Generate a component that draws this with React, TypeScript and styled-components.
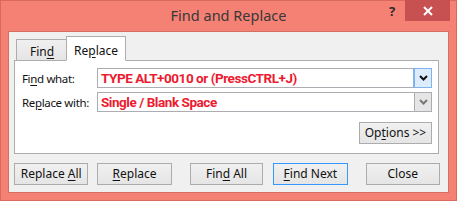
import React from "react";
import styled, { createGlobalStyle, css } from "styled-components";

const Global = createGlobalStyle`
  html, body { margin: 0; padding: 0; background: #f47f72; }
  body { width: 457px; height: 201px; overflow: hidden; }
`;

const FONT = `"Noto Sans", "Open Sans", "Liberation Sans", sans-serif`;

const Window = styled.div`
  box-sizing: border-box;
  width: 457px;
  height: 201px;
  background: #f58174;
  border: 1px solid #d96a5e;
  display: flex;
  flex-direction: column;
  font-family: ${FONT};
`;

const TitleBar = styled.div`
  position: relative;
  height: 30px;
  display: flex;
  align-items: center;
  justify-content: center;
  flex-shrink: 0;
`;

const Title = styled.div`
  font-size: 14.5px;
  color: #383838;
  margin-top: -2px;
`;

const HelpBtn = styled.div`
  position: absolute;
  left: 384px;
  top: 2px;
  width: 14px;
  height: 16px;
  font-size: 13px;
  font-weight: bold;
  color: #2b2b2b;
  text-align: center;
  line-height: 16px;
`;

const CloseBtn = styled.div`
  position: absolute;
  left: 404px;
  top: -1px;
  width: 45px;
  height: 21px;
  background: #c75050;
  display: flex;
  align-items: center;
  justify-content: center;
`;

const Client = styled.div`
  box-sizing: border-box;
  margin: 0 7px 7px 7px;
  flex: 1;
  background: #f0f0f0;
  border: 1px solid #d47063;
  padding: 4px 8px 0 5px;
  display: flex;
  flex-direction: column;
`;

const TabStrip = styled.div`
  display: flex;
  align-items: flex-end;
  padding-left: 2px;
  height: 25px;
  position: relative;
  z-index: 1;
  margin-bottom: -1px;
`;

const Tab = styled.div<{ $active?: boolean }>`
  box-sizing: border-box;
  font-size: 12px;
  color: #111;
  border: 1px solid #adadad;
  display: flex;
  justify-content: center;
  ${(p) =>
    p.$active
      ? css`
          height: 25px;
          width: 60px;
          background: #fff;
          border-bottom-color: #fff;
          padding-top: 5px;
          margin-left: -1px;
        `
      : css`
          height: 22px;
          width: 51px;
          background: linear-gradient(#f0f0f0, #e5e5e5);
          border-right: none;
          padding-top: 3px;
        `}
`;

const U = styled.span`
  text-decoration: underline;
  text-underline-offset: 2px;
`;

const Panel = styled.div`
  box-sizing: border-box;
  height: 94px;
  background: #fff;
  border: 1px solid #adadad;
  margin-right: 1px;
  padding: 7px 6px 0 7px;
  display: flex;
  flex-direction: column;
`;

const FieldRow = styled.div`
  display: flex;
  align-items: center;
  height: 20px;
  margin-bottom: 4px;
`;

const Label = styled.div`
  width: 75px;
  font-size: 11.5px;
  letter-spacing: -0.35px;
  color: #111;
`;

const Combo = styled.div`
  box-sizing: border-box;
  flex: 1;
  height: 20px;
  border: 1px solid #abadb3;
  display: flex;
  align-items: center;
  background: #fff;
`;

const ComboText = styled.div`
  flex: 1;
  padding-left: 3px;
  font-family: Roboto, "Noto Sans", sans-serif;
  font-size: 13.5px;
  letter-spacing: -0.45px;
  font-weight: bold;
  color: #ec1b30;
  white-space: nowrap;
  overflow: hidden;
`;

const DropBtn = styled.div<{ $focus?: boolean }>`
  box-sizing: border-box;
  width: 17px;
  height: 18px;
  display: flex;
  align-items: center;
  justify-content: center;
  border-left: 1px solid ${(p) => (p.$focus ? "#7eb4ea" : "#acacac")};
  background: ${(p) => (p.$focus ? "#dcecfc" : "#e5e5e5")};
  ${(p) =>
    p.$focus &&
    css`
      outline: 1px solid #7eb4ea;
      outline-offset: 0;
    `}
`;

const OptionsRow = styled.div`
  display: flex;
  justify-content: flex-end;
  margin-top: 6px;
`;

const Button = styled.div<{ $default?: boolean; $w?: number }>`
  box-sizing: border-box;
  width: ${(p) => p.$w ?? 75}px;
  height: 22px;
  border: 1px solid ${(p) => (p.$default ? "#3399ff" : "#acacac")};
  background: linear-gradient(#f0f0f0, #e5e5e5);
  font-size: 12px;
  color: #111;
  display: flex;
  align-items: center;
  justify-content: center;
  padding-bottom: 1px;
`;

const ButtonRow = styled.div`
  display: flex;
  margin-top: 9px;
`;

const Spacer = styled.div<{ $w: number }>`
  width: ${(p) => p.$w}px;
  flex-shrink: 0;
`;

const Chevron = ({ color }: { color: string }) => (
  <svg width="9" height="6" viewBox="0 0 9 6">
    <path d="M1 1 L4.5 4.5 L8 1" stroke={color} strokeWidth="2" fill="none" />
  </svg>
);

export default function App() {
  return (
    <>
      <Global />
      <Window>
        <TitleBar>
          <Title>Find and Replace</Title>
          <HelpBtn>?</HelpBtn>
          <CloseBtn>
            <svg width="10" height="10" viewBox="0 0 10 10">
              <path d="M1 1 L9 9 M9 1 L1 9" stroke="#fff" strokeWidth="2" />
            </svg>
          </CloseBtn>
        </TitleBar>
        <Client>
          <TabStrip>
            <Tab>
              <span>
                Fin<U>d</U>
              </span>
            </Tab>
            <Tab $active>
              <span>
                Re<U>p</U>lace
              </span>
            </Tab>
          </TabStrip>
          <Panel>
            <FieldRow>
              <Label>
                Fi<U>n</U>d what:
              </Label>
              <Combo>
                <ComboText>TYPE ALT+0010 or (PressCTRL+J)</ComboText>
                <DropBtn $focus>
                  <Chevron color="#111" />
                </DropBtn>
              </Combo>
            </FieldRow>
            <FieldRow>
              <Label>
                Re<U>p</U>lace with:
              </Label>
              <Combo>
                <ComboText>Single / Blank Space</ComboText>
                <DropBtn>
                  <Chevron color="#777" />
                </DropBtn>
              </Combo>
            </FieldRow>
            <OptionsRow>
              <Button $w={73}>
                <span>
                  Op<U>t</U>ions &gt;&gt;
                </span>
              </Button>
            </OptionsRow>
          </Panel>
          <ButtonRow>
            <Button $w={75}>
              <span>
                Replace <U>A</U>ll
              </span>
            </Button>
            <Spacer $w={9} />
            <Button $w={75}>
              <span>
                <U>R</U>eplace
              </span>
            </Button>
            <Spacer $w={18} />
            <Button $w={74}>
              <span>
                Fin<U>d</U> All
              </span>
            </Button>
            <Spacer $w={10} />
            <Button $w={75} $default>
              <span>
                <U>F</U>ind Next
              </span>
            </Button>
            <Spacer $w={18} />
            <Button $w={75}>Close</Button>
          </ButtonRow>
        </Client>
      </Window>
    </>
  );
}
